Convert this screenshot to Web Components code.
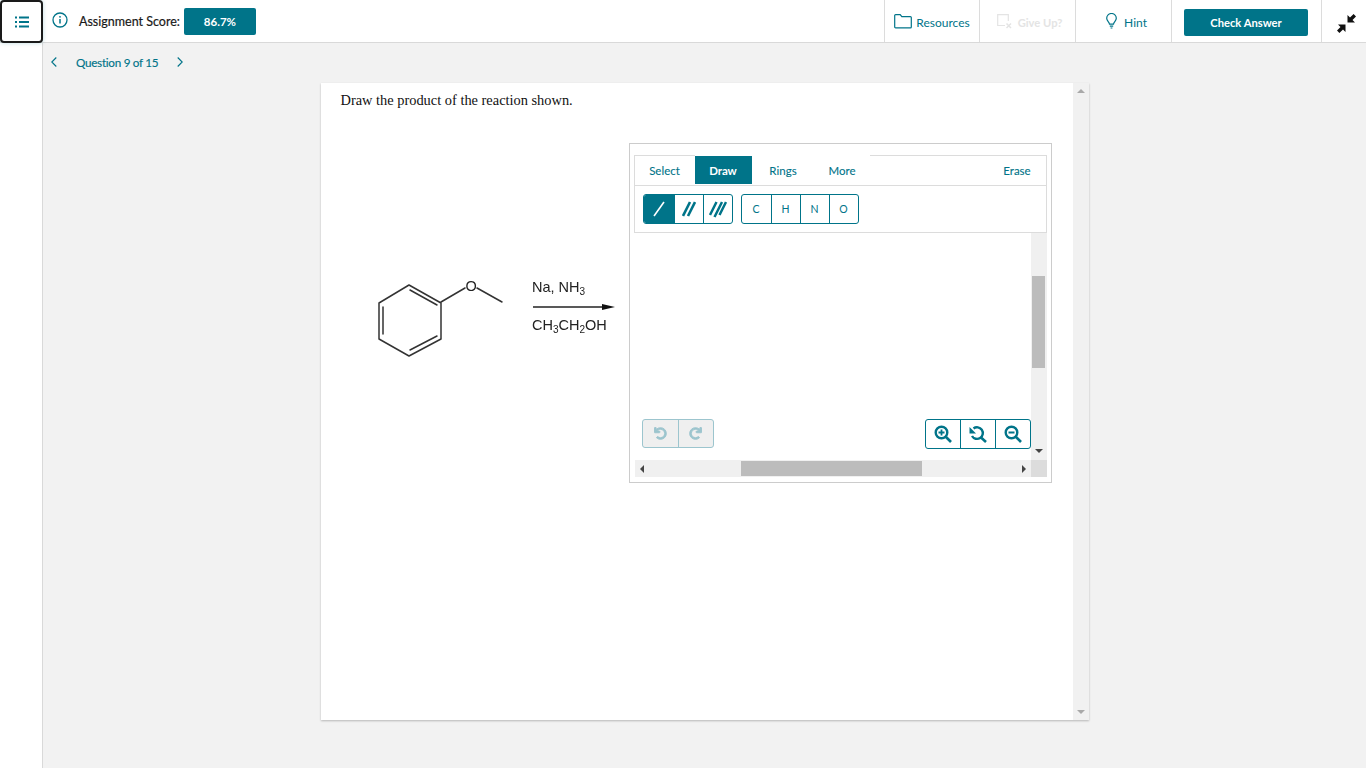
<!DOCTYPE html>
<html lang="en">
<head>
<meta charset="utf-8">
<title>Question 9 of 15</title>
<style>
    html, body { margin: 0; height: 100%; }
    body {
        font-family: Lato, "Noto Sans", sans-serif;
        font-size: 12px;
        color: #007489;
        background: #f2f2f2;
        overflow: hidden;
    }
</style>
</head>
<body>
<app-shell>
    <top-bar slot="top"></top-bar>
    <side-rail slot="rail"></side-rail>
    <question-nav slot="main" current="9" total="15"></question-nav>
    <question-card slot="main">
        <p slot="prompt">Draw the product of the reaction shown.</p>
        <reaction-figure slot="figure"></reaction-figure>
        <sketch-tool slot="answer"></sketch-tool>
    </question-card>
</app-shell>

<script>
const TEAL = '#007489';
const MUTED = '#9cc5ce';
const UNDO = 'M212.333 224.333H12c-6.627 0-12-5.373-12-12V12C0 5.373 5.373 0 12 0h48c6.627 0 12 5.373 12 12v78.112C117.773 39.279 184.26 7.47 258.175 8.007c136.906.994 246.448 111.623 246.157 248.532C504.041 393.258 393.12 504 256.333 504c-64.089 0-122.496-24.313-166.51-64.215-5.099-4.622-5.334-12.554-.467-17.42l33.967-33.967c4.474-4.474 11.662-4.717 16.401-.525C170.76 415.336 211.58 432 256.333 432c97.268 0 176-78.716 176-176 0-97.267-78.716-176-176-176-58.496 0-110.28 28.476-142.274 72.333h98.274c6.627 0 12 5.373 12 12v48c0 6.627-5.373 12-12 12z';

class AppShell extends HTMLElement {
    constructor() {
        super();
        let shadow = this.attachShadow({ mode: 'open' });
        shadow.innerHTML = `
            <style>
                :host {
                    display: grid;
                    grid-template-columns: 43px 1fr;
                    grid-template-rows: 43px 1fr;
                    height: 768px;
                }
                .top { grid-column: 1 / 3; }
                .main { min-width: 0; }
            </style>
            <div class="top"><slot name="top"></slot></div>
            <div class="rail"><slot name="rail"></slot></div>
            <div class="main"><slot name="main"></slot></div>
        `;
    }
}

class TopBar extends HTMLElement {
    constructor() {
        super();
        let shadow = this.attachShadow({ mode: 'open' });
        shadow.innerHTML = `
            <style>
                :host {
                    display: flex;
                    align-items: stretch;
                    height: 43px;
                    box-sizing: border-box;
                    background: #fff;
                    border-bottom: 1px solid #d9d9d9;
                }
                .menu {
                    width: 43px;
                    height: 43px;
                    box-sizing: border-box;
                    border: 2px solid #1a1a1a;
                    border-radius: 4px;
                    background: #fff;
                    display: grid;
                    place-items: center;
                    flex: none;
                    box-shadow: 0 0 4px rgba(0, 116, 137, .25);
                    z-index: 1;
                }
                .score {
                    display: flex;
                    align-items: center;
                    margin-left: 9px;
                    flex: 1;
                }
                .score svg { margin-bottom: 2px; }
                .label { margin-left: 11px; color: #1a1a1a; font-size: 12.5px; white-space: nowrap; -webkit-text-stroke: .2px #1a1a1a; }
                .pill {
                    margin-left: 4px;
                    width: 72px;
                    height: 27px;
                    border-radius: 2px;
                    background: ${TEAL};
                    color: #fff;
                    font-weight: 700;
                    font-size: 11.5px;
                    display: grid;
                    place-items: center;
                }
                .tool {
                    display: flex;
                    align-items: center;
                    justify-content: center;
                    gap: 4px;
                    border-left: 1px solid #dcdcdc;
                    box-sizing: border-box;
                    font-size: 12px;
                    white-space: nowrap;
                    padding-top: 2px;
                    flex: none;
                }
                .tool svg { margin-top: -2px; }
                .resources { width: 95px; }
                .giveup { width: 96px; color: #e4e4e4; font-weight: 700; font-size: 11.2px; gap: 6px; padding-left: 4px; }
                .hint { width: 96px; gap: 7px; padding-left: 6px; }
                .check-wrap {
                    flex: none;
                    width: 151px;
                    box-sizing: border-box;
                    border-left: 1px solid #dcdcdc;
                    border-right: 1px solid #dcdcdc;
                    padding: 9px 0 0 12px;
                }
                .check {
                    width: 124px;
                    height: 27px;
                    border-radius: 2px;
                    background: ${TEAL};
                    color: #fff;
                    font-weight: 700;
                    font-size: 11.2px;
                    display: grid;
                    place-items: center;
                }
                .collapse { width: 44px; flex: none; display: flex; padding: 14px 0 0 15px; box-sizing: border-box; }
            </style>
            <div class="menu">
                <svg width="14" height="12" viewBox="0 0 14 12" fill="${TEAL}">
                    <rect x="0" y="0.5" width="2" height="2"/><rect x="4" y="0.5" width="10" height="2"/>
                    <rect x="0" y="5" width="2" height="2"/><rect x="4" y="5" width="10" height="2"/>
                    <rect x="0" y="9.5" width="2" height="2"/><rect x="4" y="9.5" width="10" height="2"/>
                </svg>
            </div>
            <div class="score">
                <svg width="16" height="16" viewBox="0 0 16 16" fill="none" stroke="${TEAL}" stroke-width="1.3">
                    <circle cx="8" cy="8" r="7"/>
                    <path d="M8 7v4.6" stroke-width="1.5"/>
                    <circle cx="8" cy="4.8" r=".9" fill="${TEAL}" stroke="none"/>
                </svg>
                <span class="label">Assignment Score:</span>
                <span class="pill">86.7%</span>
            </div>
            <div class="tool resources">
                <svg width="18" height="15" viewBox="0 0 18 15" fill="none" stroke="${TEAL}" stroke-width="1.2">
                    <path d="M.7 13V1.6c0-.5.4-.9.9-.9h4.6l1.6 2h8.6c.5 0 .9.4.9.9V13c0 .5-.4.9-.9.9H1.6c-.5 0-.9-.4-.9-.9z"/>
                </svg>
                <span>Resources</span>
            </div>
            <div class="tool giveup">
                <svg width="15" height="15" viewBox="0 0 15 15" fill="none" stroke="#e4e4e4" stroke-width="1.2">
                    <path d="M8 11.5H.7V.7h10.6V7"/>
                    <path d="M9.5 9.5l4.5 4.5M14 9.5L9.5 14" stroke-width="1.5"/>
                </svg>
                <span>Give Up?</span>
            </div>
            <div class="tool hint">
                <svg width="11" height="16" viewBox="0 0 11 16" fill="none" stroke="${TEAL}" stroke-width="1.2">
                    <path d="M3.5 11.2C3.3 9 .7 8 .7 5.3a4.8 4.8 0 0 1 9.6 0c0 2.7-2.6 3.7-2.8 5.9z"/>
                    <path d="M3.8 13.2h3.4M4.6 15h1.8"/>
                </svg>
                <span>Hint</span>
            </div>
            <div class="check-wrap"><div class="check">Check Answer</div></div>
            <div class="collapse">
                <svg width="19" height="19" viewBox="0 0 19 19" fill="#111">
                    <path d="M16.6 0 19 2.400l-3.500 3.500L18 8.400h-7.500V.9L13 3.400z"/>
                    <path d="M2.400 19 0 16.600l3.500-3.500L1 10.600h7.500v7.500L6 15.600z"/>
                </svg>
            </div>
        `;
    }
}

class SideRail extends HTMLElement {
    constructor() {
        super();
        let shadow = this.attachShadow({ mode: 'open' });
        shadow.innerHTML = `
            <style>
                :host {
                    display: block;
                    height: 100%;
                    box-sizing: border-box;
                    background: #fff;
                    border-right: 1px solid #d9d9d9;
                }
            </style>
        `;
    }
}

class QuestionNav extends HTMLElement {
    constructor() {
        super();
        let shadow = this.attachShadow({ mode: 'open' });
        shadow.innerHTML = `
            <style>
                :host {
                    display: flex;
                    align-items: center;
                    height: 40px;
                    box-sizing: border-box;
                    padding: 0 0 2px 8px;
                    font-size: 11.7px;
                    letter-spacing: -.28px;
                    -webkit-text-stroke: .15px ${TEAL};
                }
                svg { display: block; flex: none; }
                span { margin: 0 19px 0 19px; white-space: nowrap; }
            </style>
            <svg width="6" height="10" viewBox="0 0 6 10" fill="none" stroke="${TEAL}" stroke-width="1.1"><path d="M5.3.5.8 5l4.5 4.5"/></svg>
            <span></span>
            <svg width="6" height="10" viewBox="0 0 6 10" fill="none" stroke="${TEAL}" stroke-width="1.1"><path d="M.7.5 5.2 5 .7 9.5"/></svg>
        `;
    }

    connectedCallback() {
        this.shadowRoot.querySelector('span').textContent =
            `Question ${this.getAttribute('current')} of ${this.getAttribute('total')}`;
    }
}

class QuestionCard extends HTMLElement {
    constructor() {
        super();
        let shadow = this.attachShadow({ mode: 'open' });
        shadow.innerHTML = `
            <style>
                :host {
                    display: flex;
                    width: 768px;
                    height: 637px;
                    margin: 0 auto;
                    background: #fff;
                    box-shadow: 0 1px 2px rgba(0, 0, 0, .25);
                }
                .body { flex: 1; min-width: 0; padding: 9px 21px 0 20px; }
                ::slotted(p) {
                    margin: 0;
                    font: 14.4px/17px "Liberation Serif", serif;
                    color: #111;
                }
                .row {
                    display: flex;
                    justify-content: space-between;
                    margin-top: 34px;
                }
                .track {
                    width: 16px;
                    flex: none;
                    background: #f1f1f1;
                    display: flex;
                    flex-direction: column;
                    justify-content: space-between;
                    align-items: center;
                    padding: 6px 0;
                    box-sizing: border-box;
                }
                .up { border: 4px solid transparent; border-top: 0; border-bottom: 4px solid #a9a9a9; }
                .down { border: 4px solid transparent; border-bottom: 0; border-top: 4px solid #a9a9a9; }
            </style>
            <div class="body">
                <slot name="prompt"></slot>
                <div class="row">
                    <slot name="figure"></slot>
                    <slot name="answer"></slot>
                </div>
            </div>
            <div class="track"><i class="up"></i><i class="down"></i></div>
        `;
    }
}

class ReactionFigure extends HTMLElement {
    constructor() {
        super();
        let shadow = this.attachShadow({ mode: 'open' });
        // viewBox uses page coordinates so the bonds read off the reference directly
        shadow.innerHTML = `
            <style>
                :host { display: block; width: 279px; height: 340px; }
                svg { display: block; filter: blur(.3px); }
                .bond { stroke: #333; stroke-width: 1.5; fill: none; stroke-linecap: round; stroke-linejoin: round; }
                text { font-family: "Liberation Sans", Arial, sans-serif; font-size: 14.5px; fill: #222; }
                .sub { font-size: 10px; }
            </style>
            <svg width="279" height="340" viewBox="341 143 279 340">
                <path class="bond" d="M409 285 441 303V339L409 356 379 339V303Z"/>
                <path class="bond" d="M410 290 437 305M383 307V334M410 350 437 336"/>
                <path class="bond" d="M441 302 465 288M477 288 502 302"/>
                <text x="465.500" y="291">O</text>
                <text x="532" y="292">Na, NH<tspan class="sub" dy="3">3</tspan></text>
                <path d="M533 307H604" stroke="#222" stroke-width="1.3"/>
                <path d="M602 304 615 307 602 310Z" fill="#111"/>
                <text x="532" y="330">CH<tspan class="sub" dy="3">3</tspan><tspan dy="-3">CH</tspan><tspan class="sub" dy="3">2</tspan><tspan dy="-3">OH</tspan></text>
            </svg>
        `;
    }
}

class ToolGroup extends HTMLElement {
    constructor() {
        super();
        let shadow = this.attachShadow({ mode: 'open' });
        shadow.innerHTML = `
            <style>
                :host {
                    display: inline-flex;
                    height: 30px;
                    box-sizing: border-box;
                    border: 1px solid var(--line, ${TEAL});
                    border-radius: 3px;
                    overflow: hidden;
                    background: var(--fill, #fff);
                }
                ::slotted(*) {
                    display: grid;
                    place-items: center;
                    box-sizing: border-box;
                    height: 100%;
                    border-left: 1px solid var(--line, ${TEAL});
                    font-size: 10.5px;
                    color: ${TEAL};
                }
                ::slotted(:first-child) { border-left: 0; }
                ::slotted(.on) { background: ${TEAL}; color: #fff; }
            </style>
            <slot></slot>
        `;
    }
}

class SketchTool extends HTMLElement {
    constructor() {
        super();
        let shadow = this.attachShadow({ mode: 'open' });
        shadow.innerHTML = `
            <style>
                :host {
                    display: block;
                    width: 423px;
                    height: 340px;
                    box-sizing: border-box;
                    border: 1px solid #ccc;
                    padding: 11px 4px 5px 4px;
                    background: #fff;
                }
                .tabs {
                    position: relative;
                    display: flex;
                    height: 31px;
                    box-sizing: border-box;
                    border: 1px solid #dcdcdc;
                    border-top: 0;
                    font-size: 11.5px;
                    -webkit-text-stroke: .1px ${TEAL};
                }
                .tabs::before, .tabs::after {
                    content: "";
                    position: absolute;
                    top: 0;
                    height: 1px;
                    background: #dcdcdc;
                }
                .tabs::before { left: -1px; width: 61px; }
                .tabs::after { right: -1px; width: 177px; }
                .tab { display: grid; place-items: center; height: 29px; padding-top: 2px; box-sizing: border-box; width: 59px; }
                .tab:first-child { width: 60px; }
                .tab.on { background: ${TEAL}; color: #fff; width: 57px; margin-top: 1px; height: 28px; padding-top: 1px; font-weight: 700; -webkit-text-stroke: 0; letter-spacing: -.1px; }
                .tab.rings { margin-left: 2px; }
                .erase { margin-left: auto; width: 57px; }
                .tools {
                    display: flex;
                    gap: 8px;
                    height: 47px;
                    box-sizing: border-box;
                    padding: 8px 0 0 8px;
                    border: 1px solid #dcdcdc;
                    border-top: 0;
                }
                .w29 { width: 29px; }
                .w30 { width: 30px; }
                .w34 { width: 34px; }
                .w35 { width: 35px; }
                .stage {
                    display: grid;
                    grid-template-columns: 1fr 16px;
                    grid-template-rows: 1fr 17px;
                    height: 244px;
                    margin: 0 0 0 1px;
                }
                .canvas { position: relative; background: #fff; }
                .float { position: absolute; bottom: 11px; }
                .float.left { left: 7px; height: 29px; bottom: 12px; --line: ${MUTED}; --fill: #efefef; }
                .float.right { right: 0; }
                .vbar { background: #f0f0f0; position: relative; }
                .vbar .thumb { position: absolute; left: 1px; right: 2px; top: 43px; height: 92px; background: #bcbcbc; }
                .vbar .down { position: absolute; left: 4px; bottom: 7px; border: 4px solid transparent; border-bottom: 0; border-top: 4px solid #444; }
                .hbar { background: #f0f0f0; position: relative; }
                .hbar .thumb { position: absolute; top: 1px; bottom: 1px; left: 106px; width: 181px; background: #bcbcbc; }
                .hbar .left { position: absolute; left: 5px; top: 5px; border: 4px solid transparent; border-left: 0; border-right: 4px solid #444; }
                .hbar .right { position: absolute; right: 5px; top: 5px; border: 4px solid transparent; border-right: 0; border-left: 4px solid #444; }
                .corner { background: #dcdcdc; }
            </style>
            <div class="tabs">
                <div class="tab">Select</div>
                <div class="tab on">Draw</div>
                <div class="tab rings">Rings</div>
                <div class="tab">More</div>
                <div class="tab erase">Erase</div>
            </div>
            <div class="tools">
                <tool-group>
                    <div class="on w30"><svg width="14" height="16" viewBox="0 0 14 16" stroke="#fff" stroke-width="1.6"><path d="M2 15 12 1"/></svg></div>
                    <div class="w29"><svg width="14" height="16" viewBox="0 0 14 16" stroke="${TEAL}" stroke-width="2.6"><path d="M1 15 8 1M6 15 13 1"/></svg></div>
                    <div class="w29"><svg width="18" height="18" viewBox="0 0 18 18" stroke="${TEAL}" stroke-width="2.5"><path d="M1 15 7.500 2M5.500 17 13 2M10.500 15 17 2"/></svg></div>
                </tool-group>
                <tool-group>
                    <div class="w29">C</div>
                    <div class="w29">H</div>
                    <div class="w29">N</div>
                    <div class="w29">O</div>
                </tool-group>
            </div>
            <div class="stage">
                <div class="canvas">
                    <tool-group class="float left">
                        <div class="w35"><svg width="13" height="13" viewBox="-20 -20 552 552" fill="${MUTED}" stroke="${MUTED}" stroke-width="40"><path d="${UNDO}"/></svg></div>
                        <div class="w35"><svg width="13" height="13" viewBox="-20 -20 552 552" fill="${MUTED}" stroke="${MUTED}" stroke-width="40"><path transform="translate(512) scale(-1 1)" d="${UNDO}"/></svg></div>
                    </tool-group>
                    <tool-group class="float right">
                        <div class="w34"><svg width="18" height="18" viewBox="0 0 18 18" fill="none" stroke="${TEAL}" stroke-width="2.400"><circle cx="7.500" cy="7.500" r="5.800"/><path d="M12 12l5 5" stroke-width="2.600"/><path d="M4.500 7.500h6M7.500 4.500v6" stroke-width="1.800"/></svg></div>
                        <div class="w35"><svg width="18" height="18" viewBox="0 0 18 18" fill="none" stroke="${TEAL}" stroke-width="2.400"><path d="M4.500 3.500A5.800 5.800 0 1 1 3 11"/><path d="M12 12.500l5 4.500" stroke-width="2.600"/><path d="M0.500 2v6.500h6.500z" fill="${TEAL}" stroke="none"/></svg></div>
                        <div class="w35"><svg width="18" height="18" viewBox="0 0 18 18" fill="none" stroke="${TEAL}" stroke-width="2.400"><circle cx="7.500" cy="7.500" r="5.800"/><path d="M12 12l5 5" stroke-width="2.600"/><path d="M4.500 7.500h6" stroke-width="1.800"/></svg></div>
                    </tool-group>
                </div>
                <div class="vbar"><div class="thumb"></div><i class="down"></i></div>
                <div class="hbar"><div class="thumb"></div><i class="left"></i><i class="right"></i></div>
                <div class="corner"></div>
            </div>
        `;
    }
}

customElements.define('app-shell', AppShell);
customElements.define('top-bar', TopBar);
customElements.define('side-rail', SideRail);
customElements.define('question-nav', QuestionNav);
customElements.define('question-card', QuestionCard);
customElements.define('reaction-figure', ReactionFigure);
customElements.define('tool-group', ToolGroup);
customElements.define('sketch-tool', SketchTool);
</script>
</body>
</html>
